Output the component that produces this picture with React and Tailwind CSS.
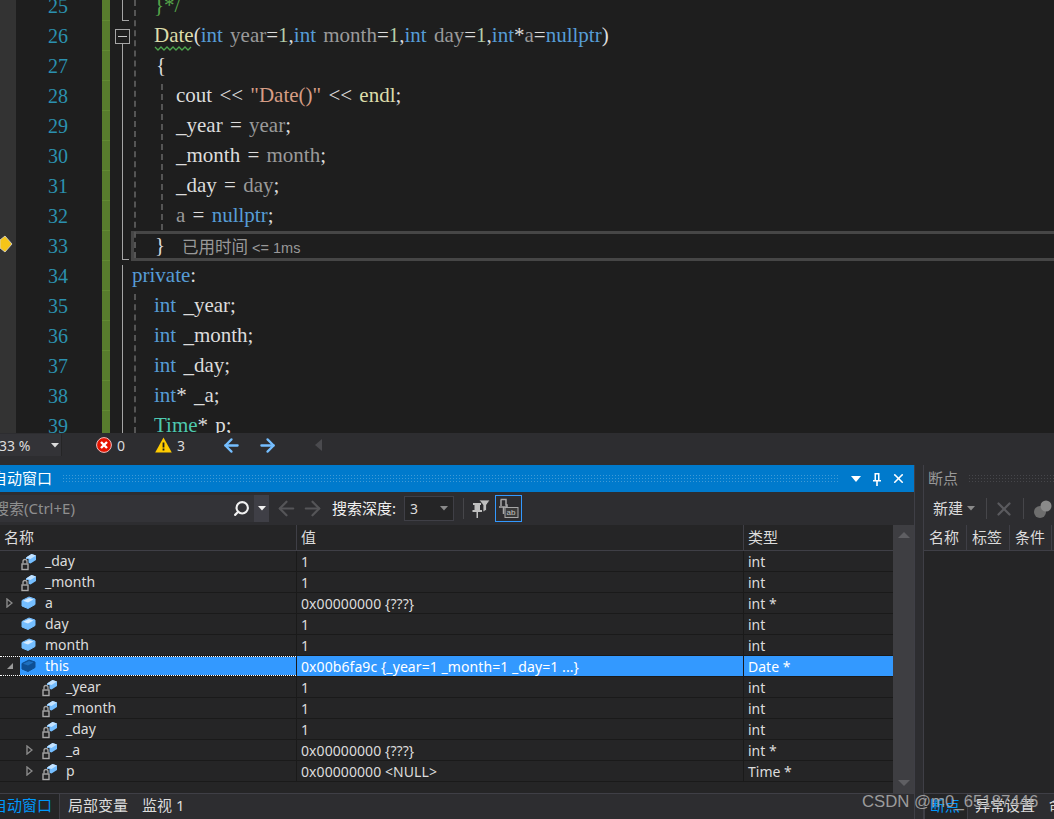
import React from "react";
import { ArrowLeft, ArrowRight, Search, X } from "lucide-react";

const kw = "text-[#569cd6]";
const par = "text-[#9a9a9a]";
const fn = "text-[#dcdcaa]";
const num = "text-[#b5cea8]";
const txt = "text-[#dcdcdc]";

const codeLines = [
  { n: 25, pad: "pl-[22px]", parts: [["}*/", "text-[#57a64a]"]] },
  {
    n: 26,
    pad: "pl-[22px]",
    squiggle: true,
    parts: [
      ["Date", fn], ["(", txt], ["int", kw], [" year", par], ["=", txt], ["1", num], [",", txt],
      ["int", kw], [" month", par], ["=", txt], ["1", num], [",", txt],
      ["int", kw], [" day", par], ["=", txt], ["1", num], [",", txt],
      ["int", kw], ["*", txt], ["a", par], ["=", txt], ["nullptr", kw], [")", txt],
    ],
  },
  { n: 27, pad: "pl-[24px]", parts: [["{", txt]] },
  {
    n: 28,
    pad: "pl-[44px]",
    parts: [["cout << ", txt], ['"Date()"', "text-[#d69d85]"], [" << ", txt], ["endl", fn], [";", txt]],
  },
  { n: 29, pad: "pl-[44px]", parts: [["_year = ", txt], ["year", par], [";", txt]] },
  { n: 30, pad: "pl-[44px]", parts: [["_month = ", txt], ["month", par], [";", txt]] },
  { n: 31, pad: "pl-[44px]", parts: [["_day = ", txt], ["day", par], [";", txt]] },
  { n: 32, pad: "pl-[44px]", parts: [["a", par], [" = ", txt], ["nullptr", kw], [";", txt]] },
  { n: 33, pad: "pl-[21px]", current: true, parts: [["}", txt]] },
  { n: 34, pad: "pl-0", parts: [["private", kw], [":", txt]] },
  { n: 35, pad: "pl-[22px]", parts: [["int", kw], [" _year;", txt]] },
  { n: 36, pad: "pl-[22px]", parts: [["int", kw], [" _month;", txt]] },
  { n: 37, pad: "pl-[22px]", parts: [["int", kw], [" _day;", txt]] },
  { n: 38, pad: "pl-[22px]", parts: [["int", kw], ["* _a;", txt]] },
  { n: 39, pad: "pl-[22px]", parts: [["Time", "text-[#4ec9b0]"], ["* p;", txt]] },
];

const vars = [
  { name: "_day", value: "1", type: "int", priv: true, level: 0 },
  { name: "_month", value: "1", type: "int", priv: true, level: 0 },
  { name: "a", value: "0x00000000 {???}", type: "int *", level: 0, arrow: true },
  { name: "day", value: "1", type: "int", level: 0 },
  { name: "month", value: "1", type: "int", level: 0 },
  { name: "this", value: "0x00b6fa9c {_year=1 _month=1 _day=1 ...}", type: "Date *", level: 0, open: true, selected: true },
  { name: "_year", value: "1", type: "int", priv: true, level: 1 },
  { name: "_month", value: "1", type: "int", priv: true, level: 1 },
  { name: "_day", value: "1", type: "int", priv: true, level: 1 },
  { name: "_a", value: "0x00000000 {???}", type: "int *", priv: true, level: 1, arrow: true },
  { name: "p", value: "0x00000000 <NULL>", type: "Time *", priv: true, level: 1, arrow: true },
];

function VarIcon({ priv, selected }) {
  if (priv) {
    return (
      <svg width="16" height="20" viewBox="0 0 16 20" className="shrink-0">
        <path d="M6 6.5 L11.5 3 L16 4.5 V9 L10.5 12.5 L6 11 Z" fill="#75beff" />
        <path d="M6 6.5 L11.5 3 L16 4.5 L10.5 8 Z" fill="#c4e3ff" />
        <rect x="0" y="8" width="8.5" height="12" fill="#252526" />
        <path d="M3 12.5 V10.5 a2 2 0 0 1 4 0 V12.5" fill="none" stroke="#a8a8a8" strokeWidth="1.3" />
        <rect x="2" y="13" width="6" height="5.5" fill="none" stroke="#a8a8a8" strokeWidth="1.4" />
      </svg>
    );
  }
  return (
    <svg width="16" height="18" viewBox="0 0 16 18" className="shrink-0">
      <path d="M2 6.5 L9 3 L15 5 V10.5 L8 14.5 L2 12 Z" fill={selected ? "#0e4f94" : "#75beff"} stroke={selected ? "#0e4f94" : "#75beff"} strokeLinejoin="round" />
      <path d="M3 6.8 L9 4 L13.5 5.5 L8 8.5 Z" fill={selected ? "#1d6fc0" : "#d4eaff"} />
    </svg>
  );
}

function Expander({ open }) {
  if (open) {
    return (
      <svg width="8" height="8" viewBox="0 0 8 8" className="shrink-0">
        <path d="M7 1 V7 H1 Z" fill="#9a9a9a" />
      </svg>
    );
  }
  return (
    <svg width="7" height="10" viewBox="0 0 7 10" className="shrink-0">
      <path d="M1 1 L6 5 L1 9 Z" fill="none" stroke="#8a8a8a" strokeWidth="1.4" />
    </svg>
  );
}

function Caret({ color = "#dcdcdc" }) {
  return (
    <svg width="8" height="5" viewBox="0 0 8 5">
      <path d="M0 0 H8 L4 4.5 Z" fill={color} />
    </svg>
  );
}

function Editor() {
  return (
    <div className="relative h-[433px] overflow-hidden bg-[#1e1e1e]">
      <div className="-mt-[9px] flex flex-col">
        {codeLines.map((line) => (
          <div key={line.n} className="flex h-[30px] items-center font-['Liberation_Serif',serif] text-[21px] [word-spacing:2px]">
            <div className="h-full w-4 shrink-0 bg-[#333333]" />
            <div className="w-[52px] shrink-0 text-right text-[20px] text-[#2b91af]">{line.n}</div>
            <div className="w-[34px] shrink-0" />
            <div className="h-full w-2 shrink-0 border-b border-[#628a33] bg-[#587c2d]" />
            <div className="w-[22px] shrink-0" />
            <div
              className={
                line.current
                  ? "-ml-px flex h-[30px] min-w-0 flex-1 items-center border-y-[3px] border-l-[3px] border-[#464646] " + line.pad
                  : "-mt-px min-w-0 flex-1 whitespace-pre " + line.pad
              }
            >
              <span className="relative whitespace-pre">
                {line.parts.map((p, i) => (
                  <span key={i} className={p[1]}>{p[0]}</span>
                ))}
                {line.squiggle && (
                  <svg width="40" height="5" viewBox="0 0 40 5" className="absolute left-0 top-[23px]">
                    <path d="M1 1 L4 4 L7 1 L10 4 L13 1 L16 4 L19 1 L22 4 L25 1 L28 4 L31 1 L34 4 L37 1" fill="none" stroke="#4ea64e" strokeWidth="1.3" />
                  </svg>
                )}
              </span>
              {line.current && (
                <span className="ml-[17px] font-['Liberation_Sans','Noto_Sans_CJK_SC',sans-serif] text-[#999999] [word-spacing:0]">
                  <span className="font-['Noto_Sans_CJK_SC',sans-serif] text-[16.5px]">已用时间</span>
                  <span className="ml-1 text-[14.5px]">{"<= 1ms"}</span>
                </span>
              )}
            </div>
          </div>
        ))}
      </div>

      {/* outlining guides */}
      <div className="absolute left-[122px] top-0 h-[21px] w-px bg-[#a5a5a5]" />
      <div className="absolute left-[122px] top-[20px] h-px w-[7px] bg-[#a5a5a5]" />
      <div className="absolute left-[115px] top-[29px] flex h-[15px] w-[15px] items-center justify-center border border-[#a5a5a5] bg-[#1e1e1e]">
        <div className="h-px w-[9px] bg-[#c8c8c8]" />
      </div>
      <div className="absolute left-[122px] top-[44px] h-[216px] w-px bg-[#a5a5a5]" />
      <div className="absolute left-[122px] top-[259px] h-px w-[7px] bg-[#a5a5a5]" />
      <div className="absolute left-[122px] top-[265px] h-[168px] w-px bg-[#a5a5a5]" />
      <div className="absolute left-[134px] top-0 h-[258px] border-l-2 border-dashed border-[#555555]" />
      <div className="absolute left-[134px] top-[294px] h-[139px] border-l-2 border-dashed border-[#555555]" />
      <div className="absolute left-[161px] top-[84px] h-[146px] border-l-2 border-dashed border-[#555555]" />

      {/* current statement arrow */}
      <svg width="13" height="18" viewBox="0 0 13 18" className="absolute left-0 top-[235px]">
        <path d="M0 5 L5 1 L12 9 L5 17 L0 13 Z" fill="#f5c518" stroke="#d8d8d8" strokeWidth="0.8" />
      </svg>
    </div>
  );
}

function StatusBar() {
  return (
    <div className="flex h-6 items-center bg-[#2d2d30] text-[14px] text-[#dcdcdc]">
      <div className="flex h-[22px] w-[62px] shrink-0 items-center justify-between border-r border-[#252526] bg-[#333337] pr-[2px]">
        <span className="-ml-[1px]">33 %</span>
        <Caret />
      </div>
      <svg width="16" height="16" viewBox="0 0 16 16" className="ml-[34px] shrink-0">
        <circle cx="8" cy="8" r="7.4" fill="#e51400" stroke="#f0c0c0" strokeWidth="1" />
        <path d="M5 5 L11 11 M11 5 L5 11" stroke="#ffffff" strokeWidth="2.4" />
      </svg>
      <span className="ml-[5px]">0</span>
      <svg width="17" height="16" viewBox="0 0 17 16" className="ml-[30px] shrink-0">
        <path d="M8.5 0.5 L16.8 15.5 H0.2 Z" fill="#ffcc00" />
        <path d="M8.5 5.5 V10.5 M8.5 11.5 V13.5" stroke="#1e1e1e" strokeWidth="1.8" />
      </svg>
      <span className="ml-[5px]">3</span>
      <ArrowLeft size={21} strokeWidth={2.6} className="ml-[36px] text-[#75beff]" />
      <ArrowRight size={21} strokeWidth={2.6} className="ml-[15px] text-[#75beff]" />
      <svg width="8" height="12" viewBox="0 0 8 12" className="ml-[37px]">
        <path d="M7 0 V12 L0 6 Z" fill="#4a4a4e" />
      </svg>
    </div>
  );
}

function Toolbar() {
  return (
    <div className="flex h-[33px] items-center overflow-hidden bg-[#2d2d30] text-[15px]">
      <div className="flex h-[27px] w-[254px] shrink-0 items-center justify-between bg-[#333337] pr-[4px]">
        <span className="-ml-[6px] whitespace-nowrap text-[#8f8f8f]">搜索(Ctrl+E)</span>
        <Search size={17} strokeWidth={3} className="-scale-x-100 text-[#f1f1f1]" />
      </div>
      <div className="flex h-[27px] w-[15px] items-center justify-center bg-[#3f3f46]">
        <Caret color="#f1f1f1" />
      </div>
      <ArrowLeft size={23} strokeWidth={2.3} className="ml-[6px] text-[#555558]" />
      <ArrowRight size={23} strokeWidth={2.3} className="ml-[3px] text-[#555558]" />
      <span className="ml-[8px] whitespace-nowrap text-[#f1f1f1]">搜索深度:</span>
      <div className="ml-2 flex h-[25px] w-[50px] items-center justify-between border border-[#3f3f46] bg-[#252526] px-[5px] text-[14px] text-[#dcdcdc]">
        <span>3</span>
        <Caret color="#8a8a8a" />
      </div>
      <div className="ml-[9px] h-[21px] w-px bg-[#46464a]" />
      <svg width="20" height="20" viewBox="0 0 20 20" className="ml-[8px]">
        <path d="M1 4 H9 V6 H8 V11 H10 V13 H6 V19 H4.5 V13 H0.5 V11 H2.5 V6 H1 Z" fill="#c0c0c0" />
        <path d="M7 1 H18 L14.5 6 V11 L11 13 V6 Z" fill="#c0c0c0" stroke="#2d2d30" strokeWidth="0.8" />
      </svg>
      <div className="ml-[3px] flex h-[27px] w-[27px] items-center justify-center border border-[#3399ff]">
        <svg width="21" height="21" viewBox="0 0 21 21">
          <path d="M2.5 1.5 H8 V7 H9 V9 H5.5 V16 M1 9 H5.5 M3 2 V8" fill="none" stroke="#a8a8a8" strokeWidth="1.5" />
          <rect x="7" y="9.5" width="13" height="10" fill="#3a3a3a" stroke="#a8a8a8" />
          <text x="8.5" y="17" fontSize="8" fontFamily="Liberation Sans, sans-serif" fill="#c0c0c0">ab</text>
        </svg>
      </div>
    </div>
  );
}

function VarRow({ v }) {
  return (
    <div className="flex h-[21px] border-b border-[#1a1a1a] text-[14px] leading-[22px] text-[#dcdcdc]">
      <div
        className={
          "flex w-[296px] shrink-0 items-center " +
          (v.selected ? "border-y border-dotted border-white" : "")
        }
      >
        <div className={v.level === 1 ? "flex w-[41px] shrink-0 items-center justify-end pr-[8px]" : "flex w-5 shrink-0 items-center pl-[6px]"}>
          {(v.arrow || v.open) && <Expander open={v.open} />}
        </div>
        <div className={"flex h-full flex-1 items-center " + (v.selected ? "bg-[#3399ff] text-white" : "")}>
          <VarIcon priv={v.priv} selected={v.selected} />
          <span className="ml-[9px]">{v.name}</span>
        </div>
      </div>
      <div className={"w-[447px] shrink-0 whitespace-nowrap border-l border-[#1a1a1a] pl-1 tracking-[0.08px] " + (v.selected ? "bg-[#3399ff] text-white" : "")}>
        {v.value}
      </div>
      <div className={"flex-1 border-l border-[#1a1a1a] pl-1 " + (v.selected ? "bg-[#3399ff] text-white" : "")}>
        {v.type}
      </div>
    </div>
  );
}

function AutosPanel() {
  return (
    <div className="flex w-[915px] shrink-0 flex-col border-r border-[#3f3f46]">
      <div className="flex h-[27px] items-center bg-[#007acc] pr-[8px] text-[15px] text-white">
        <span className="-ml-[8px] shrink-0 whitespace-nowrap">自动窗口</span>
        <div className="ml-[10px] h-[9px] flex-1 bg-[radial-gradient(#3f9ad6_1px,transparent_1px)] bg-[length:3px_3px]" />
        <div className="ml-[12px] flex items-center">
          <svg width="10" height="6" viewBox="0 0 10 6"><path d="M0 0 H10 L5 6 Z" fill="#ffffff" /></svg>
          <svg width="10" height="14" viewBox="0 0 10 14" className="ml-[11px]">
            <path d="M2.5 1 H7.5 V8 H9 V9.5 H5.8 V14 H4.2 V9.5 H1 V8 H2.5 Z M4 2.5 V8 H6 V2.5 Z" fill="#ffffff" />
          </svg>
          <X size={15} strokeWidth={2.6} className="ml-[9px]" />
        </div>
      </div>
      <Toolbar />
      <div className="flex flex-1 bg-[#252526]">
        <div className="flex w-[893px] shrink-0 flex-col">
          <div className="flex h-[26px] items-center border-b border-[#3f3f46] text-[15px] text-[#dcdcdc]">
            <div className="w-[296px] shrink-0 pl-[4px]">名称</div>
            <div className="flex h-full w-[447px] shrink-0 items-center border-l border-[#3f3f46] pl-1">值</div>
            <div className="flex h-full flex-1 items-center border-l border-[#3f3f46] pl-1">类型</div>
          </div>
          {vars.map((v, i) => (
            <VarRow key={i} v={v} />
          ))}
        </div>
        <div className="flex flex-1 flex-col items-center justify-between bg-[#3e3e42] py-[7px]">
          <svg width="12" height="6" viewBox="0 0 12 6"><path d="M6 0 L12 6 H0 Z" fill="#5f5f63" /></svg>
          <svg width="12" height="6" viewBox="0 0 12 6"><path d="M0 0 H12 L6 6 Z" fill="#5f5f63" /></svg>
        </div>
      </div>
      <div className="flex h-[26px] items-center border-t border-[#3f3f46] pb-[3px] text-[15px] text-[#dcdcdc]">
        <div className="-mb-[3px] flex h-[26px] w-[60px] shrink-0 items-center border-r border-[#3f3f46] bg-[#252526] pb-[3px] text-[#0097fb]">
          <span className="-ml-[8px] whitespace-nowrap">自动窗口</span>
        </div>
        <span className="ml-2">局部变量</span>
        <span className="ml-[14px]">监视 1</span>
      </div>
    </div>
  );
}

function BreakpointsPanel() {
  return (
    <div className="ml-[8px] flex min-w-0 flex-1 flex-col overflow-hidden border-l border-[#3f3f46] text-[15px]">
      <div className="flex h-[27px] items-center pl-[4px]">
        <span className="shrink-0 text-[#999999]">断点</span>
        <div className="ml-[10px] h-[9px] flex-1 bg-[radial-gradient(#46464a_1px,transparent_1px)] bg-[length:3px_3px]" />
      </div>
      <div className="flex h-[33px] items-center pl-[9px] text-[#dcdcdc]">
        <span className="shrink-0">新建</span>
        <span className="ml-[4px]"><Caret color="#8a8a8a" /></span>
        <div className="ml-[11px] h-[21px] w-px shrink-0 bg-[#46464a]" />
        <X size={22} strokeWidth={2.4} className="ml-[6px] shrink-0 text-[#5a5a5e]" />
        <div className="ml-[8px] h-[21px] w-px shrink-0 bg-[#46464a]" />
        <svg width="20" height="20" viewBox="0 0 20 20" className="ml-[8px] shrink-0">
          <circle cx="8" cy="13" r="6" fill="#6e6e6e" />
          <circle cx="14" cy="7" r="5.5" fill="#8a8a8a" />
        </svg>
      </div>
      <div className="flex h-[26px] shrink-0 items-center border-b border-[#3f3f46] whitespace-nowrap text-[#dcdcdc]">
        <div className="flex h-full w-[42px] shrink-0 items-center pl-[5px]">名称</div>
        <div className="flex h-full w-[43px] shrink-0 items-center border-l border-[#3f3f46] pl-[5px]">标签</div>
        <div className="flex h-full w-[42px] shrink-0 items-center border-l border-[#3f3f46] pl-[5px]">条件</div>
        <div className="h-full border-l border-[#3f3f46]" />
      </div>
      <div className="flex-1 bg-[#252526]" />
      <div className="flex h-[26px] items-center whitespace-nowrap border-t border-[#3f3f46] pb-[3px] text-[#dcdcdc]">
        <div className="-mb-[3px] flex h-[26px] w-[44px] shrink-0 items-center border-x border-[#3f3f46] bg-[#252526] pb-[3px] pl-[5px] text-[#0097fb]">断点</div>
        <span className="ml-[7px]">异常设置</span>
        <span className="ml-[14px]">命令窗口</span>
      </div>
    </div>
  );
}

export default function App() {
  return (
    <div className="relative flex h-[819px] w-[1054px] flex-col overflow-hidden bg-[#2d2d30] font-['Noto_Sans','Noto_Sans_CJK_SC',sans-serif]">
      <Editor />
      <StatusBar />
      <div className="mt-2 flex min-h-0 flex-1">
        <AutosPanel />
        <BreakpointsPanel />
      </div>
      <div className="absolute left-[862px] top-[789px] whitespace-nowrap font-['Liberation_Sans',sans-serif] text-[16.75px] text-[#a8a8a8] opacity-90">
        CSDN @m0_65187446
      </div>
    </div>
  );
}
